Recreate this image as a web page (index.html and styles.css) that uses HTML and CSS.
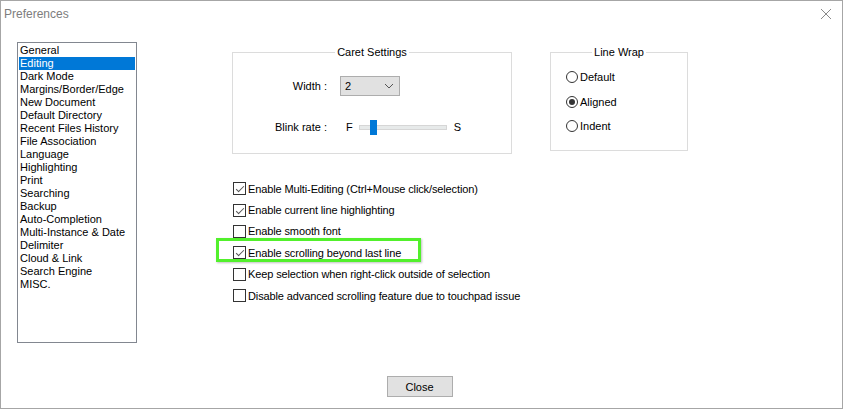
FILE: index.html
```html
<!DOCTYPE html>
<html lang="en">
<head>
  <meta charset="UTF-8" />
  <title>Preferences</title>
  <link rel="stylesheet" href="styles.css">
</head>
<body>

  <div class="window">
    <div class="titlebar">
      <span class="title">Preferences</span>
      <svg class="close-x" width="12" height="12" viewBox="0 0 12 12">
        <path d="M1 1 L11 11 M11 1 L1 11" stroke="#8a8a8a" stroke-width="1" fill="none" />
      </svg>
    </div>

    <div class="main">
      <ul class="category-list">
        <li>General</li>
        <li class="selected">Editing</li>
        <li>Dark Mode</li>
        <li>Margins/Border/Edge</li>
        <li>New Document</li>
        <li>Default Directory</li>
        <li>Recent Files History</li>
        <li>File Association</li>
        <li>Language</li>
        <li>Highlighting</li>
        <li>Print</li>
        <li>Searching</li>
        <li>Backup</li>
        <li>Auto-Completion</li>
        <li>Multi-Instance &amp; Date</li>
        <li>Delimiter</li>
        <li>Cloud &amp; Link</li>
        <li>Search Engine</li>
        <li>MISC.</li>
      </ul>

      <div class="panel">
        <div class="group-row">
          <fieldset class="group caret">
            <legend>Caret Settings</legend>
            <div class="caret-grid">
              <span class="field-label">Width :</span>
              <div class="combo">
                <span>2</span>
                <svg width="10" height="6" viewBox="0 0 10 6">
                  <path d="M1 1 L5 5 L9 1" stroke="#555" stroke-width="1" fill="none" />
                </svg>
              </div>
              <span class="field-label">Blink rate :</span>
              <div class="slider-row">
                <span>F</span>
                <div class="track"><div class="thumb"></div></div>
                <span>S</span>
              </div>
            </div>
          </fieldset>

          <fieldset class="group wrap">
            <legend>Line Wrap</legend>
            <div class="radio-list">
              <div class="radio-row"><span class="radio"></span>Default</div>
              <div class="radio-row"><span class="radio on"></span>Aligned</div>
              <div class="radio-row"><span class="radio"></span>Indent</div>
            </div>
          </fieldset>
        </div>

        <div class="checks">
          <div class="check-row"><span class="box checked"></span>Enable Multi-Editing (Ctrl+Mouse click/selection)</div>
          <div class="check-row"><span class="box checked"></span>Enable current line highlighting</div>
          <div class="check-row"><span class="box"></span>Enable smooth font</div>
          <div class="check-row marked"><span class="box checked"></span>Enable scrolling beyond last line</div>
          <div class="check-row"><span class="box"></span>Keep selection when right-click outside of selection</div>
          <div class="check-row"><span class="box"></span>Disable advanced scrolling feature due to touchpad issue</div>
        </div>
      </div>
    </div>

    <div class="footer">
      <button class="close-btn">Close</button>
    </div>
  </div>

</body>
</html>
```

FILE: styles.css
```css
body {
  margin: 0;
  background: #ffffff;
  font-family: "Liberation Sans", Arial, sans-serif;
  font-size: 11px;
  color: #000000;
}

.window {
  box-sizing: border-box;
  width: 843px;
  height: 409px;
  border: 1px solid #a6a6a6;
  display: flex;
  flex-direction: column;
}

.titlebar {
  height: 41px;
  display: flex;
  justify-content: space-between;
  align-items: flex-start;
  padding: 5px 10px 0 3px;
  box-sizing: border-box;
}

.title {
  font-size: 12px;
  line-height: 16px;
  color: #7d7d7d;
}

.close-x {
  margin-top: 2px;
}

.main {
  flex: 1;
  display: flex;
  padding-left: 16px;
}

.category-list {
  list-style: none;
  margin: 0;
  padding: 1px;
  width: 120px;
  height: 301px;
  box-sizing: border-box;
  border: 1px solid #828790;
}

.category-list li {
  line-height: 13px;
  height: 13px;
  padding-left: 1px;
  white-space: nowrap;
}

.category-list li.selected {
  background: #0078d7;
  color: #ffffff;
}

.panel {
  margin-left: 95px;
  padding-top: 3px;
}

.group-row {
  display: flex;
  gap: 38px;
}

.group {
  margin: 0;
  padding: 0;
  border: 1px solid #dcdcdc;
  box-sizing: border-box;
}

.group legend {
  margin: 0 auto;
  padding: 0 2px;
  line-height: 14px;
  font-size: 11px;
}

.caret {
  width: 280px;
  height: 109px;
}

.caret-grid {
  display: grid;
  grid-template-columns: 94px auto;
  column-gap: 13px;
  row-gap: 23px;
  align-items: center;
  padding-top: 17px;
}

.field-label {
  text-align: right;
}

.combo {
  width: 60px;
  height: 20px;
  box-sizing: border-box;
  border: 1px solid #adadad;
  background: #e1e1e1;
  display: flex;
  align-items: center;
  justify-content: space-between;
  padding: 0 5px 0 4px;
}

.slider-row {
  display: flex;
  align-items: center;
  height: 16px;
  margin-left: 6px;
}

.track {
  width: 86px;
  height: 3px;
  border: 1px solid #d6d6d6;
  background: #e7eaea;
  margin: 0 7px 0 6px;
  display: flex;
  align-items: center;
}

.thumb {
  width: 7px;
  height: 15px;
  margin-left: 10px;
  background: #0078d7;
  flex-shrink: 0;
}

.wrap {
  width: 138px;
  height: 106px;
}

.radio-list {
  padding: 6px 0 0 15px;
}

.radio-row {
  display: flex;
  align-items: center;
  height: 24.5px;
}

.radio {
  width: 12px;
  height: 12px;
  box-sizing: border-box;
  border: 1px solid #333333;
  border-radius: 50%;
  margin-right: 2px;
  display: flex;
  align-items: center;
  justify-content: center;
}

.radio.on::after {
  content: "";
  width: 6px;
  height: 6px;
  border-radius: 50%;
  background: #333333;
}

.checks {
  margin-top: 24px;
  margin-left: 1px;
  letter-spacing: -0.12px;
}

.check-row {
  display: flex;
  align-items: center;
  height: 21.4px;
  white-space: nowrap;
}

.box {
  width: 13px;
  height: 13px;
  box-sizing: border-box;
  border: 1px solid #333333;
  margin-right: 2px;
  position: relative;
}

.box.checked::after {
  content: "";
  position: absolute;
  left: 1px;
  top: 1px;
  width: 7px;
  height: 3px;
  border-left: 1px solid #555555;
  border-bottom: 1px solid #555555;
  transform: translate(1px, 2px) rotate(-45deg);
}

.check-row.marked {
  position: relative;
}

.check-row.marked::after {
  content: "";
  position: absolute;
  left: -17px;
  top: -4px;
  width: 205px;
  height: 24px;
  box-sizing: border-box;
  border: 3px solid #52f02c;
  box-shadow: 1px 1px 2px rgba(0, 0, 0, 0.25);
}

.footer {
  display: flex;
  justify-content: center;
  padding: 0 4px 11px 0;
}

.close-btn {
  width: 66px;
  height: 21px;
  border: 1px solid #adadad;
  background: #e1e1e1;
  font-family: "Liberation Sans", Arial, sans-serif;
  font-size: 11px;
  color: #000000;
  padding: 0;
}
```
